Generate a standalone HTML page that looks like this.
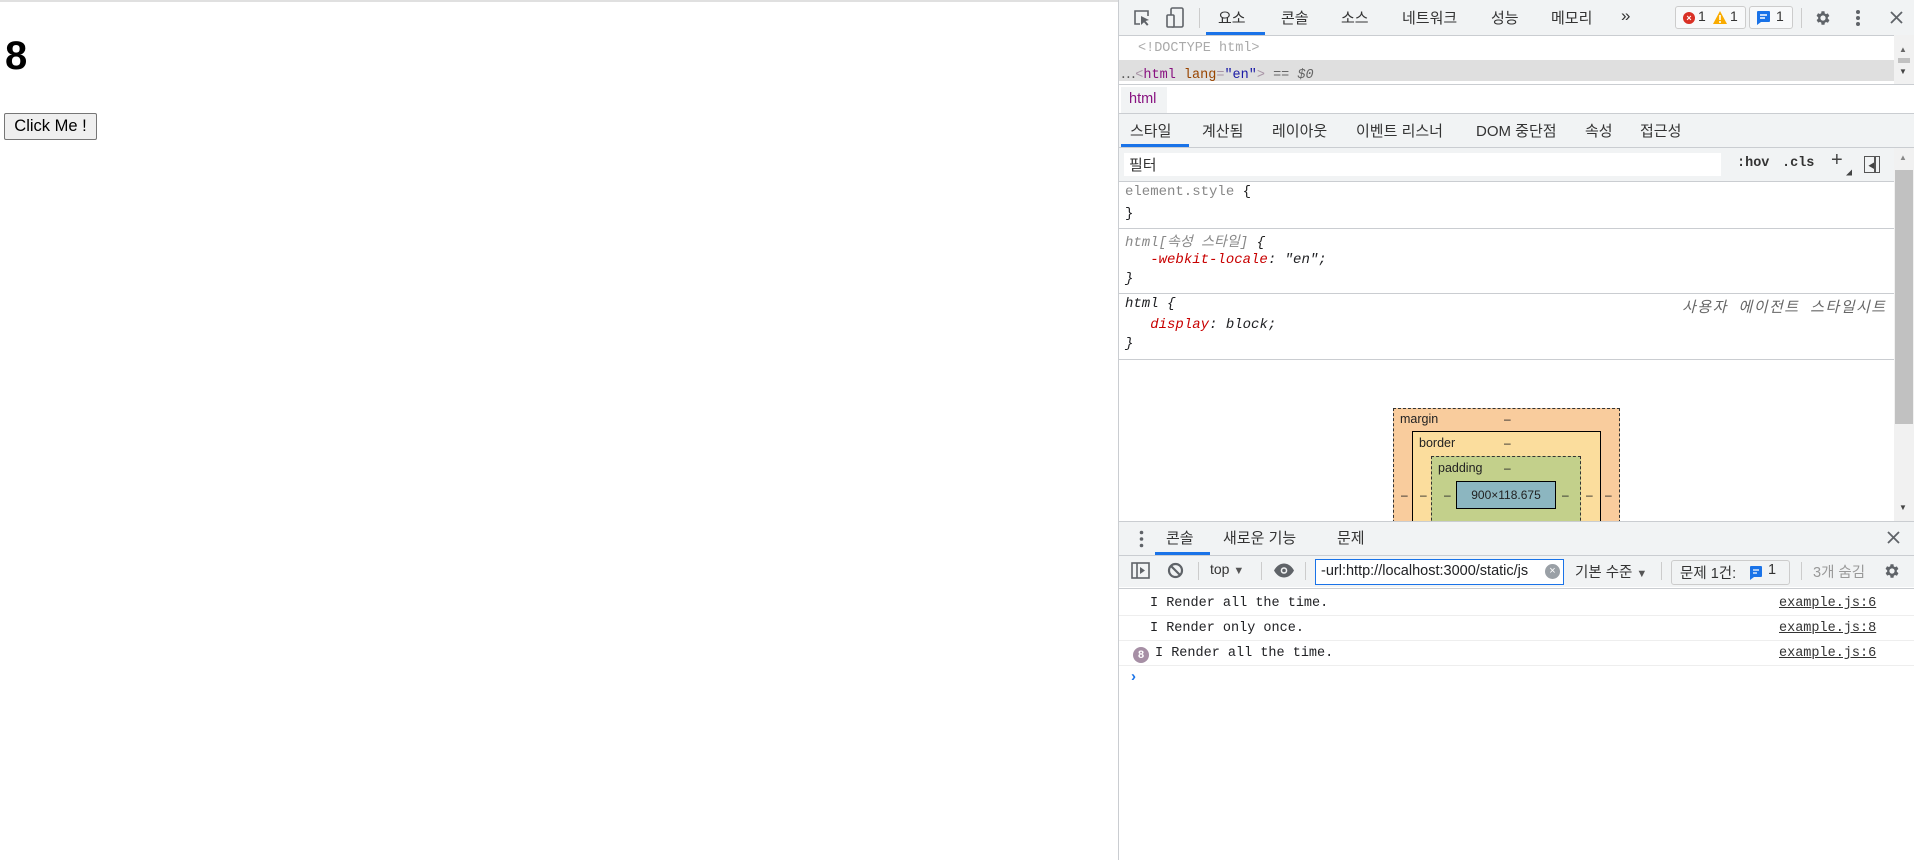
<!DOCTYPE html>
<html><head><meta charset="utf-8"><style>
*{margin:0;padding:0;box-sizing:border-box}
body{width:1914px;height:860px;position:relative;overflow:hidden;background:#fff;font-family:"Liberation Sans","Noto Sans CJK KR",sans-serif;color:#202124}
.a{position:absolute;white-space:nowrap}
.k{font-family:"Liberation Sans","Noto Sans CJK KR",sans-serif;font-size:15px;color:#333}
.m{font-family:"Liberation Mono","Noto Sans CJK KR",monospace;font-size:13.5px}
.s{font-size:14px}
.hl{position:absolute;left:1119px;right:0;height:1px;background:#cacdd1}
</style></head><body>
<div class="a" style="left:0;top:0;width:1119px;height:2px;background:#e0e0e0"></div>
<div class="a" style="left:5px;top:34px;font-size:40px;font-weight:bold;color:#000">8</div>
<div class="a" style="left:4px;top:113px;width:93px;height:27px;border:1px solid #767676;border-radius:2px;background:#efefef;font-size:16.5px;color:#000;text-align:center;line-height:25px">Click Me !</div>

<div class="a" style="left:1118px;top:0;width:1px;height:860px;background:#cacdd1"></div>
<!-- toolbar -->
<div class="a" style="left:1119px;top:0;width:795px;height:35px;background:#f1f3f4"></div>
<div class="hl" style="top:35px"></div>
<svg class="a" style="left:1132px;top:8px" width="20" height="20" viewBox="0 0 20 20"><path d="M8 16H3V3h13v5" fill="none" stroke="#5f6368" stroke-width="1.6"/><path d="M9 8l8 4-3.5 1 3 3.5-1.5 1.3-3-3.5L9 17z" fill="#5f6368"/></svg>
<svg class="a" style="left:1165px;top:6px" width="20" height="24" viewBox="0 0 20 24"><rect x="6" y="2" width="12" height="19" rx="1.5" fill="none" stroke="#5f6368" stroke-width="1.6"/><rect x="2" y="9" width="7" height="12" rx="1" fill="#f1f3f4" stroke="#5f6368" stroke-width="1.6"/></svg>
<div class="a" style="left:1199px;top:8px;width:1px;height:20px;background:#ccc"></div>
<div class="a k" style="left:1218px;top:7px">요소</div>
<div class="a" style="left:1206px;top:32px;width:59px;height:3px;background:#1a73e8"></div>
<div class="a k" style="left:1281px;top:7px">콘솔</div>
<div class="a k" style="left:1341px;top:7px">소스</div>
<div class="a k" style="left:1402px;top:7px">네트워크</div>
<div class="a k" style="left:1491px;top:7px">성능</div>
<div class="a k" style="left:1551px;top:7px">메모리</div>
<div class="a k" style="left:1621px;top:6px;font-size:17px">»</div>
<div class="a" style="left:1675px;top:6px;width:71px;height:23px;border:1px solid #ccc;border-radius:3px;background:#f8f9fa"></div>
<div class="a" style="left:1683px;top:12px;width:12px;height:12px;border-radius:6px;background:#d93025;color:#fff;font-size:9px;text-align:center;line-height:12px;font-weight:bold">×</div>
<div class="a k" style="left:1698px;top:8px;font-size:14px">1</div>
<svg class="a" style="left:1713px;top:11px" width="14" height="13"><path d="M7 0L14 13H0z" fill="#f9ab00"/><path d="M7 4v5M7 10v2" stroke="#fff" stroke-width="1.6"/></svg>
<div class="a k" style="left:1730px;top:8px;font-size:14px">1</div>
<div class="a" style="left:1749px;top:6px;width:44px;height:23px;border:1px solid #ccc;border-radius:3px;background:#f8f9fa"></div>
<svg class="a" style="left:1757px;top:11px" width="13" height="14"><path d="M0 1a1 1 0 011-1h11a1 1 0 011 1v9a1 1 0 01-1 1H4l-4 3z" fill="#1a73e8"/><path d="M3 4h7M3 7h5" stroke="#fff" stroke-width="1.4"/></svg>
<div class="a k" style="left:1776px;top:8px;font-size:14px">1</div>
<div class="a" style="left:1801px;top:8px;width:1px;height:20px;background:#ccc"></div>
<svg class="a" style="left:1814px;top:9px" width="18" height="18" viewBox="0 0 24 24"><path fill="#5f6368" d="M19.4 13a7.5 7.5 0 000-2l2.1-1.6-2-3.5-2.5 1a7 7 0 00-1.7-1L15 3h-4l-.4 2.7a7 7 0 00-1.7 1l-2.5-1-2 3.5L6.6 11a7.5 7.5 0 000 2l-2.1 1.6 2 3.5 2.5-1a7 7 0 001.7 1L11 21h4l.4-2.7a7 7 0 001.7-1l2.5 1 2-3.5zM13 15.5a3.5 3.5 0 110-7 3.5 3.5 0 010 7z" transform="translate(-1 0)"/></svg>
<svg class="a" style="left:1855px;top:9px" width="6" height="18"><circle cx="3" cy="3" r="2" fill="#5f6368"/><circle cx="3" cy="9" r="2" fill="#5f6368"/><circle cx="3" cy="15" r="2" fill="#5f6368"/></svg>
<svg class="a" style="left:1890px;top:11px" width="13" height="13"><path d="M1 1l11 11M12 1L1 12" stroke="#5f6368" stroke-width="1.8"/></svg>
<!-- DOM -->
<div class="a" style="left:1119px;top:60px;width:775px;height:21px;background:#dfdfdf"></div>
<div class="a m" style="left:1138px;top:41px;color:#aaa">&lt;!DOCTYPE html&gt;</div>
<div class="a m" style="left:1121px;top:62px"><span style="color:#555">⋯</span><span style="color:#a894a6">&lt;</span><span style="color:#881280">html</span> <span style="color:#994500">lang</span><span style="color:#a894a6">=</span><span style="color:#1a1aa6">"en"</span><span style="color:#a894a6">&gt;</span> <span style="color:#666">== <i>$0</i></span></div>
<div class="a" style="left:1894px;top:35px;width:20px;height:49px;background:#f1f1f1"></div>
<div class="a" style="left:1898px;top:58px;width:12px;height:5px;background:#c1c1c1"></div>
<div class="a" style="left:1899px;top:45px;font-size:8px;color:#666">▲</div>
<div class="a" style="left:1899px;top:67px;font-size:8px;color:#444">▼</div>
<div class="hl" style="top:84px"></div>
<div class="a" style="left:1121px;top:87px;width:46px;height:26px;background:#f1f3f4"></div>
<div class="a k" style="left:1129px;top:91px;color:#881280;font-size:14.5px">html</div>
<div class="hl" style="top:113px"></div>
<!-- sub tabs -->
<div class="a" style="left:1119px;top:114px;width:795px;height:33px;background:#f1f3f4"></div>
<div class="a k" style="left:1130px;top:120px">스타일</div>
<div class="a k" style="left:1202px;top:120px">계산됨</div>
<div class="a k" style="left:1272px;top:120px">레이아웃</div>
<div class="a k" style="left:1356px;top:120px">이벤트 리스너</div>
<div class="a k" style="left:1476px;top:120px">DOM 중단점</div>
<div class="a k" style="left:1585px;top:120px">속성</div>
<div class="a k" style="left:1640px;top:120px">접근성</div>
<div class="a" style="left:1121px;top:144px;width:68px;height:3px;background:#1a73e8"></div>
<div class="hl" style="top:147px"></div>
<div class="a" style="left:1119px;top:148px;width:775px;height:33px;background:#f1f3f4"></div>
<div class="a" style="left:1124px;top:153px;width:597px;height:23px;background:#fff"></div>
<div class="a k" style="left:1129px;top:154px">필터</div>
<div class="a m" style="left:1737px;top:156px;font-weight:bold;color:#333">:hov</div>
<div class="a m" style="left:1782px;top:156px;font-weight:bold;color:#333">.cls</div>
<div class="a" style="left:1831px;top:149px;font-size:20px;color:#444">+</div>
<div class="a" style="left:1846px;top:168px;font-size:6px;color:#444">◢</div>
<div class="a" style="left:1864px;top:156px;width:16px;height:17px;border:1.5px solid #555"></div>
<div class="a" style="left:1874px;top:156px;width:1.5px;height:17px;background:#555"></div>
<div class="a" style="left:1868px;top:161px;font-size:7px;color:#444">◀</div>
<div class="hl" style="top:181px;right:20px"></div>
<div class="a" style="left:1894px;top:148px;width:20px;height:373px;background:#f1f1f1"></div>
<div class="a" style="left:1895px;top:170px;width:18px;height:254px;background:#c1c1c1"></div>
<div class="a" style="left:1899px;top:153px;font-size:8px;color:#888">▲</div>
<div class="a" style="left:1899px;top:503px;font-size:8px;color:#444">▼</div>
<!-- styles -->
<div class="a m s" style="left:1125px;top:184px;color:#888">element.style <span style="color:#222">{</span></div>
<div class="a m s" style="left:1125px;top:206px">}</div>
<div class="hl" style="top:228px;right:20px"></div>
<div class="a m s" style="left:1125px;top:231px;font-style:italic;color:#888">html[속성 스타일] <span style="color:#222">{</span></div>
<div class="a m s" style="left:1125px;top:252px;font-style:italic">&nbsp;&nbsp;&nbsp;<span style="color:#c80000">-webkit-locale</span>: "en";</div>
<div class="a m s" style="left:1125px;top:271px;font-style:italic">}</div>
<div class="hl" style="top:293px;right:20px"></div>
<div class="a m s" style="left:1125px;top:296px;font-style:italic">html {</div>
<div class="a m s" style="left:1125px;top:317px;font-style:italic">&nbsp;&nbsp;&nbsp;<span style="color:#c80000">display</span>: block;</div>
<div class="a m s" style="left:1125px;top:336px;font-style:italic">}</div>
<div class="a m" style="left:1682px;top:296px;font-style:italic;color:#666;font-size:15px;letter-spacing:1.5px">사용자 에이전트 스타일시트</div>
<div class="hl" style="top:359px;right:20px"></div>
<!-- box model -->
<div class="a" style="left:1393px;top:408px;width:227px;height:120px;background:#f9cc9d;border:1px dashed #333"></div>
<div class="a" style="left:1412px;top:431px;width:189px;height:100px;background:#fbdd9d;border:1px solid #000"></div>
<div class="a" style="left:1431px;top:456px;width:150px;height:80px;background:#c3d08b;border:1px dashed #333"></div>
<div class="a" style="left:1456px;top:481px;width:100px;height:28px;background:#8cb6c0;border:1px solid #000;font-size:12px;text-align:center;line-height:26px;color:#222">900×118.675</div>
<div class="a" style="left:1400px;top:412px;font-size:12.5px;color:#222">margin</div>
<div class="a" style="left:1419px;top:436px;font-size:12.5px;color:#222">border</div>
<div class="a" style="left:1438px;top:461px;font-size:12.5px;color:#222">padding</div>
<div class="a" style="left:1504px;top:412px;font-size:12px">–</div>
<div class="a" style="left:1504px;top:436px;font-size:12px">–</div>
<div class="a" style="left:1504px;top:461px;font-size:12px">–</div>
<div class="a" style="left:1401px;top:488px;font-size:12px">–</div>
<div class="a" style="left:1420px;top:488px;font-size:12px">–</div>
<div class="a" style="left:1444px;top:488px;font-size:12px">–</div>
<div class="a" style="left:1562px;top:488px;font-size:12px">–</div>
<div class="a" style="left:1586px;top:488px;font-size:12px">–</div>
<div class="a" style="left:1605px;top:488px;font-size:12px">–</div>
<!-- drawer -->
<div class="a" style="left:1119px;top:521px;width:795px;height:66px;background:#f1f3f4"></div>
<div class="hl" style="top:521px"></div>
<svg class="a" style="left:1139px;top:530px" width="5" height="18"><circle cx="2.5" cy="2.5" r="1.8" fill="#5f6368"/><circle cx="2.5" cy="9" r="1.8" fill="#5f6368"/><circle cx="2.5" cy="15.5" r="1.8" fill="#5f6368"/></svg>
<div class="a k" style="left:1166px;top:527px">콘솔</div>
<div class="a" style="left:1155px;top:552px;width:55px;height:3px;background:#1a73e8"></div>
<div class="a k" style="left:1223px;top:527px">새로운 기능</div>
<div class="a k" style="left:1337px;top:527px">문제</div>
<svg class="a" style="left:1887px;top:531px" width="13" height="13"><path d="M1 1l11 11M12 1L1 12" stroke="#5f6368" stroke-width="1.8"/></svg>
<div class="hl" style="top:555px"></div>
<svg class="a" style="left:1131px;top:562px" width="19" height="17"><rect x="1" y="1" width="17" height="15" fill="none" stroke="#5f6368" stroke-width="1.6"/><path d="M6 1v15" stroke="#5f6368" stroke-width="1.6"/><path d="M9 5l5 3.5-5 3.5z" fill="#5f6368"/></svg>
<svg class="a" style="left:1167px;top:562px" width="17" height="17"><circle cx="8.5" cy="8.5" r="6.5" fill="none" stroke="#5f6368" stroke-width="2.2"/><path d="M4 4l9 9" stroke="#5f6368" stroke-width="2.2"/></svg>
<div class="a" style="left:1198px;top:562px;width:1px;height:18px;background:#ccc"></div>
<div class="a k" style="left:1210px;top:561px;font-size:14px">top <span style="font-size:11px;color:#555">▼</span></div>
<div class="a" style="left:1261px;top:562px;width:1px;height:18px;background:#ccc"></div>
<svg class="a" style="left:1273px;top:563px" width="22" height="15"><path d="M1 7.5C4 2 8 0.5 11 0.5S18 2 21 7.5C18 13 14 14.5 11 14.5S4 13 1 7.5z" fill="#5f6368"/><circle cx="11" cy="7.5" r="3.3" fill="#f1f3f4"/><circle cx="11" cy="7.5" r="1.8" fill="#5f6368"/></svg>
<div class="a" style="left:1305px;top:562px;width:1px;height:18px;background:#ccc"></div>
<div class="a" style="left:1315px;top:559px;width:249px;height:26px;background:#fff;border:1.5px solid #1a73e8;overflow:hidden"><span style="position:absolute;left:5px;top:3px;font-size:14.5px;color:#202124">-url:http://localhost:3000/static/js</span><span style="position:absolute;right:3px;top:4px;width:15px;height:15px;border-radius:8px;background:#9aa0a6;color:#fff;font-size:11px;text-align:center;line-height:15px">×</span></div>
<div class="a k" style="left:1575px;top:561px;font-size:14.5px">기본 수준 <span style="font-size:11px;color:#555">▼</span></div>
<div class="a" style="left:1661px;top:562px;width:1px;height:18px;background:#ccc"></div>
<div class="a" style="left:1671px;top:560px;width:119px;height:25px;border:1px solid #ccc;border-radius:3px"></div>
<div class="a k" style="left:1680px;top:562px;font-size:14.5px">문제 1건:</div>
<svg class="a" style="left:1750px;top:566px" width="12" height="14"><path d="M0 1a1 1 0 011-1h10a1 1 0 011 1v9a1 1 0 01-1 1H4l-4 3z" fill="#1a73e8"/><path d="M3 4h6M3 7h4" stroke="#fff" stroke-width="1.3"/></svg>
<div class="a k" style="left:1768px;top:562px;font-size:14.5px">1</div>
<div class="a" style="left:1801px;top:562px;width:1px;height:18px;background:#ccc"></div>
<div class="a k" style="left:1813px;top:561px;font-size:14.5px;color:#999">3개 숨김</div>
<svg class="a" style="left:1883px;top:562px" width="18" height="18" viewBox="0 0 24 24"><path fill="#5f6368" d="M19.4 13a7.5 7.5 0 000-2l2.1-1.6-2-3.5-2.5 1a7 7 0 00-1.7-1L15 3h-4l-.4 2.7a7 7 0 00-1.7 1l-2.5-1-2 3.5L6.6 11a7.5 7.5 0 000 2l-2.1 1.6 2 3.5 2.5-1a7 7 0 001.7 1L11 21h4l.4-2.7a7 7 0 001.7-1l2.5 1 2-3.5zM13 15.5a3.5 3.5 0 110-7 3.5 3.5 0 010 7z" transform="translate(-1 0)"/></svg>
<div class="hl" style="top:588px"></div>
<!-- messages -->
<div class="a m" style="left:1150px;top:596px">I Render all the time.</div>
<div class="a m" style="left:1779px;top:596px;text-decoration:underline;color:#333">example.js:6</div>
<div class="hl" style="top:615px;background:#eee"></div>
<div class="a m" style="left:1150px;top:621px">I Render only once.</div>
<div class="a m" style="left:1779px;top:621px;text-decoration:underline;color:#333">example.js:8</div>
<div class="hl" style="top:640px;background:#eee"></div>
<div class="a" style="left:1133px;top:647px;width:16px;height:16px;border-radius:8px;background:#a68fa5;color:#fff;font-size:11px;text-align:center;line-height:16px;font-weight:bold">8</div>
<div class="a m" style="left:1155px;top:646px">I Render all the time.</div>
<div class="a m" style="left:1779px;top:646px;text-decoration:underline;color:#333">example.js:6</div>
<div class="hl" style="top:665px;background:#eee"></div>
<div class="a" style="left:1131px;top:668px;font-size:15px;color:#1a73e8;font-weight:bold">›</div>
</body></html>
